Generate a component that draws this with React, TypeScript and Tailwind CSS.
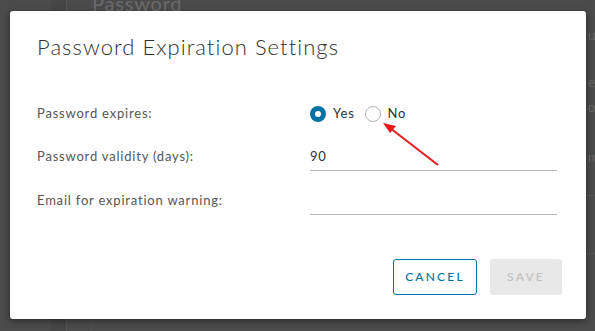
import React from "react";

const font = { fontFamily: "Lato, 'Open Sans', sans-serif" };

export default function App() {
  return (
    <div
      className="relative w-[595px] h-[331px] overflow-hidden bg-[#4b4b4b]"
      style={font}
    >
      {/* page behind the overlay */}
      <div className="absolute inset-0">
        <div className="absolute left-[51px] top-0 h-full w-[15px] bg-[#464646]" />
        <div className="absolute left-[66px] top-0 h-full w-px bg-[#555555]" />
        <div className="absolute left-[91px] top-0 h-full w-px bg-[#525252]" />
        <div className="absolute left-[92px] top-[-12px] text-[20px] tracking-[0.8px] text-[#6a6a6a]">Password</div>
        <div className="absolute left-[588px] top-[26px] text-[13px] text-[#666]">us</div>
        <div className="absolute left-[588px] top-[73px] text-[13px] text-[#666]">et</div>
        <div className="absolute left-[588px] top-[98px] text-[13px] text-[#666]">ott</div>
        <div className="absolute left-[588px] top-[148px] text-[13px] text-[#666]">m</div>
        <div className="absolute left-[586px] top-[195px] h-px w-[10px] bg-[#555]" />
        <div className="absolute left-[586px] top-[253px] h-px w-[10px] bg-[#555]" />
      </div>

      <div className="relative ml-[10px] mt-[11px] flex h-[308px] w-[576px] flex-col rounded-[3px] bg-white pl-[27px] pr-[29px] pt-[22px] shadow-[0_2px_6px_rgba(0,0,0,0.45)]">
        <h2 className="text-[22px] font-light leading-[28px] tracking-[1.05px] text-[#313131]">
          Password Expiration Settings
        </h2>

        <div className="mt-[39px] grid grid-cols-[273px_1fr] text-[13px] tracking-[0.8px] text-[#565656]">
          <div className="flex h-[28px] items-center">Password expires:</div>
          <div className="flex h-[28px] items-center gap-[7px] text-[#313131]">
            <span className="flex h-[16px] w-[16px] items-center justify-center rounded-full bg-[#0072a3]">
              <span className="h-[6px] w-[6px] rounded-full bg-white" />
            </span>
            <span>Yes</span>
            <span className="ml-[3px] h-[16px] w-[16px] rounded-full border border-[#b3b3b3] bg-white" />
            <span>No</span>
          </div>

          <div className="mt-[15px] flex h-[28px] items-center">Password validity (days):</div>
          <div className="mt-[15px] flex h-[28px] items-center border-b border-[#b8b8b8] text-[#313131]">90</div>

          <div className="mt-[16px] flex h-[28px] items-center">Email for expiration warning:</div>
          <div className="mt-[16px] h-[28px] border-b border-[#b8b8b8]" />
        </div>

        <div className="mr-[-5px] mt-[44px] flex justify-end gap-[13px]">
          <button className="h-[36px] w-[84px] rounded-[3px] border border-[#0072a3] text-[12px] font-medium tracking-[2.2px] text-[#0072a3]">
            CANCEL
          </button>
          <button className="h-[36px] w-[72px] rounded-[3px] bg-[#e8e8e8] text-[12px] font-medium tracking-[2.2px] text-[#c2c2c2]">
            SAVE
          </button>
        </div>
      </div>

      {/* annotation arrow */}
      <svg className="absolute left-0 top-0" width="595" height="331">
        <line x1="438" y1="165" x2="390" y2="128" stroke="#e8191b" strokeWidth="2" />
        <polygon points="383,123 396,126 390,133" fill="#e8191b" />
      </svg>
    </div>
  );
}
